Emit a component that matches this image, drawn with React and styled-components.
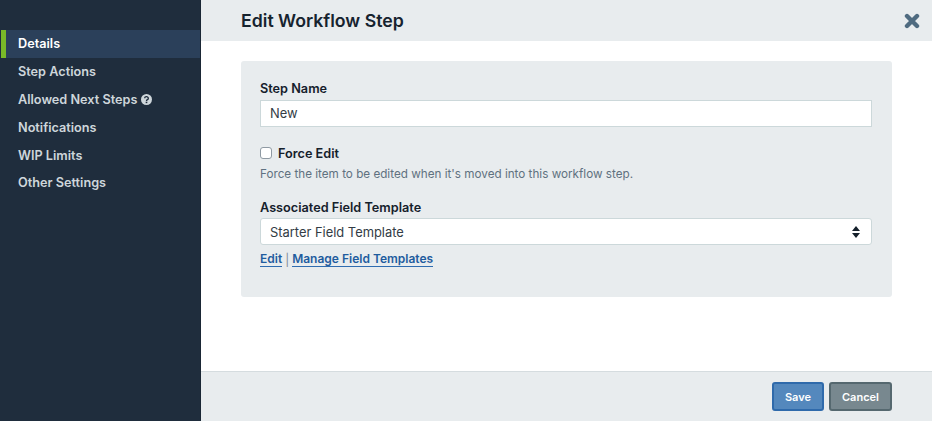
import React from 'react';
import styled, { createGlobalStyle } from 'styled-components';

const GlobalStyle = createGlobalStyle`
  html, body {
    margin: 0;
    padding: 0;
    height: 100%;
    overflow: hidden;
  }
  body {
    font-family: "Inter", "Liberation Sans", sans-serif;
    background: #fff;
  }
`;

const Shell = styled.div`
  display: flex;
  width: 932px;
  height: 421px;
`;

const Sidebar = styled.nav`
  width: 201px;
  flex: none;
  box-sizing: border-box;
  padding: 30px 0 0 1px;
  background: #1f2d3d;
  border-right: 1px solid #1a2735;
`;

const NavItem = styled.div`
  display: flex;
  align-items: center;
  gap: 4px;
  height: ${(p) => (p.$last ? '26px' : '28px')};
  box-sizing: border-box;
  padding-bottom: 1px;
  padding-left: ${(p) => (p.$active ? '12px' : '17px')};
  border-left: ${(p) => (p.$active ? '5px solid #79b928' : 'none')};
  background: ${(p) => (p.$active ? '#2b405a' : 'transparent')};
  color: ${(p) => (p.$active ? '#ffffff' : '#ced6db')};
  font-size: 12.7px;
  font-weight: 600;
`;

const HelpIcon = styled.svg`
  width: 11px;
  height: 11px;
  flex: none;
`;

const Main = styled.main`
  flex: 1;
  display: flex;
  flex-direction: column;
  min-width: 0;
`;

const Header = styled.header`
  height: 41px;
  flex: none;
  display: flex;
  align-items: center;
  justify-content: space-between;
  box-sizing: border-box;
  padding: 0 12px 0 40px;
  background: #e8ecee;
`;

const Title = styled.h1`
  margin: 0;
  font-size: 17.7px;
  font-weight: 600;
  color: #16232f;
`;

const CloseIcon = styled.svg`
  width: 16px;
  height: 16px;
  flex: none;
`;

const Body = styled.div`
  flex: 1;
  padding: 20px 40px 0;
`;

const Panel = styled.section`
  height: 236px;
  box-sizing: border-box;
  padding: 18px 20px 0 19px;
  background: #e8ecee;
  border-radius: 3px;
`;

const FieldLabel = styled.label`
  display: block;
  height: 18px;
  line-height: 20px;
  font-size: 12.7px;
  font-weight: 600;
  color: #15202b;
`;

const TextBox = styled.div`
  display: flex;
  align-items: center;
  justify-content: space-between;
  height: 27px;
  box-sizing: border-box;
  margin-top: ${(p) => (p.$round ? '2px' : '3px')};
  padding: ${(p) => (p.$round ? '1px' : '0')} 11px ${(p) => (p.$round ? '0' : '1px')} 9px;
  background: #fff;
  border: 1px solid #ccd8da;
  border-radius: ${(p) => (p.$round ? '3px' : '0')};
  font-size: 12.9px;
  line-height: 15px;
  color: #333c45;
`;

const CheckRow = styled.div`
  display: flex;
  align-items: center;
  gap: 6px;
  margin-top: 17px;
  height: 18px;
`;

const CheckBox = styled.span`
  width: 12px;
  height: 12px;
  box-sizing: border-box;
  background: #fff;
  border: 1px solid #8f9aa3;
  border-radius: 3px;
`;

const Hint = styled.p`
  margin: 3px 0 0;
  height: 18px;
  line-height: 18px;
  font-size: 11.7px;
  color: #5f7180;
`;

const SelectLabel = styled(FieldLabel)`
  margin-top: 15px;
`;

const Arrows = styled.svg`
  width: 8px;
  height: 12px;
  flex: none;
`;

const Links = styled.div`
  display: flex;
  align-items: center;
  gap: 3px;
  margin-top: 6px;
  font-size: 12px;
  font-weight: 600;
  color: #7f8c96;
`;

const FieldLink = styled.a`
  color: #1f5c9e;
  border-bottom: 1px solid #2f6cb0;
  line-height: 15px;
`;

const Divider = styled.span`
  font-weight: 400;
`;

const Footer = styled.footer`
  height: 50px;
  flex: none;
  display: flex;
  align-items: center;
  justify-content: flex-end;
  gap: 5px;
  box-sizing: border-box;
  padding: 0 40px 0 0;
  background: #e8ecee;
  border-top: 1px solid #d5dcdf;
`;

const Button = styled.button`
  height: 29px;
  width: ${(p) => (p.$primary ? '52px' : '63px')};
  padding: 0;
  box-sizing: border-box;
  font-family: inherit;
  font-size: 11px;
  font-weight: 600;
  color: #fff;
  background: ${(p) => (p.$primary ? '#5488bd' : '#78888f')};
  border: 2px solid ${(p) => (p.$primary ? '#2f6aab' : '#55686f')};
  border-radius: 3px;
`;

const navItems = ['Step Actions', 'Allowed Next Steps', 'Notifications', 'WIP Limits', 'Other Settings'];

export default function App() {
  return (
    <>
      <GlobalStyle />
      <Shell>
        <Sidebar>
          <NavItem $active>Details</NavItem>
          {navItems.map((item) => (
            <NavItem key={item} $last={item === 'Other Settings'}>
              {item}
              {item === 'Allowed Next Steps' && (
                <HelpIcon viewBox="0 0 12 12">
                  <circle cx="6" cy="6" r="6" fill="#ced6db" />
                  <path d="M4 4.7a2 1.8 0 1 1 3 1.5c-.7.4-1 .7-1 1.4" fill="none" stroke="#1f2d3d" strokeWidth="1.5" />
                  <rect x="5.1" y="8.4" width="1.8" height="1.6" fill="#1f2d3d" />
                </HelpIcon>
              )}
            </NavItem>
          ))}
        </Sidebar>
        <Main>
          <Header>
            <Title>Edit Workflow Step</Title>
            <CloseIcon viewBox="0 0 16 16">
              <path d="M3 3l10 10M13 3L3 13" stroke="#4f6b80" strokeWidth="4.4" strokeLinecap="round" />
            </CloseIcon>
          </Header>
          <Body>
            <Panel>
              <FieldLabel>Step Name</FieldLabel>
              <TextBox>New</TextBox>
              <CheckRow>
                <CheckBox />
                <FieldLabel>Force Edit</FieldLabel>
              </CheckRow>
              <Hint>Force the item to be edited when it's moved into this workflow step.</Hint>
              <SelectLabel>Associated Field Template</SelectLabel>
              <TextBox $round>
                Starter Field Template
                <Arrows viewBox="0 0 8 12">
                  <path d="M4 0l4 5H0zM4 12L0 7h8z" fill="#15202b" />
                </Arrows>
              </TextBox>
              <Links>
                <FieldLink>Edit</FieldLink>
                <Divider>|</Divider>
                <FieldLink>Manage Field Templates</FieldLink>
              </Links>
            </Panel>
          </Body>
          <Footer>
            <Button $primary>Save</Button>
            <Button>Cancel</Button>
          </Footer>
        </Main>
      </Shell>
    </>
  );
}
